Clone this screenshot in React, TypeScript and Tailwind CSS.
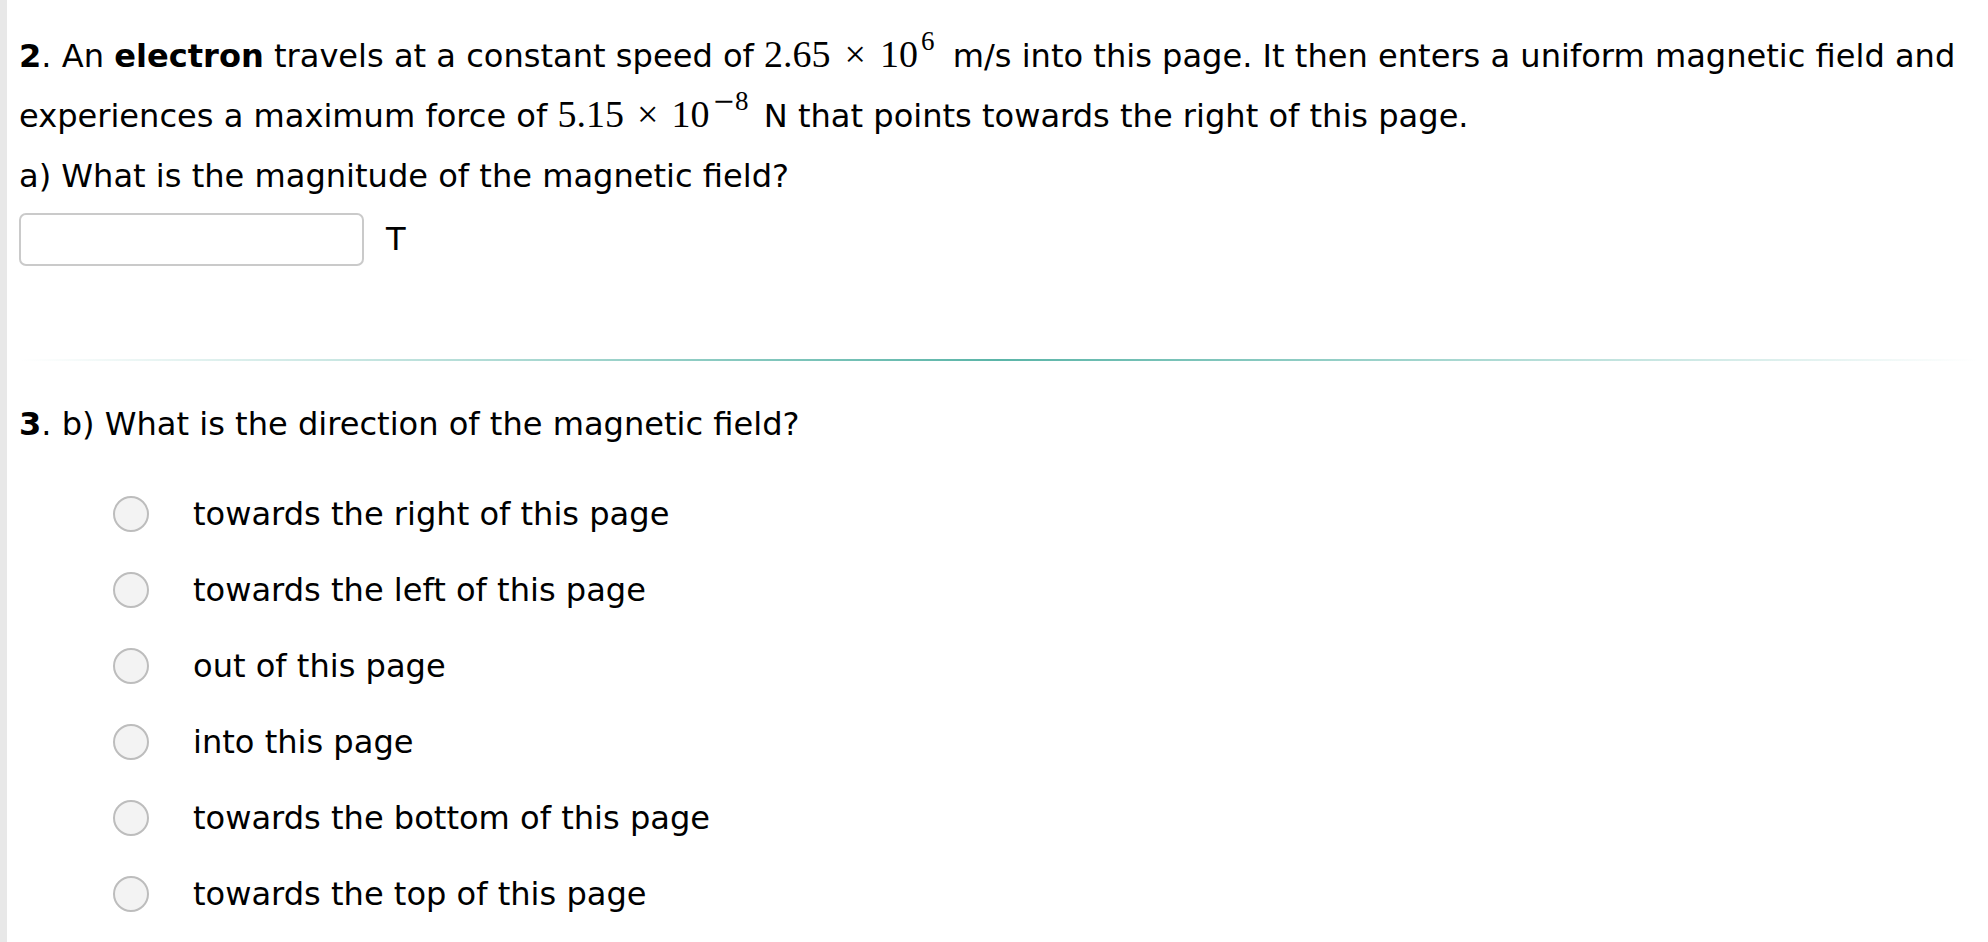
import React from "react";

const M = ({ children }: { children: React.ReactNode }) => (
  <span className="text-[38px] leading-none" style={{ fontFamily: '"Liberation Serif", "DejaVu Serif", serif' }}>
    {children}
  </span>
);

const options = [
  "towards the right of this page",
  "towards the left of this page",
  "out of this page",
  "into this page",
  "towards the bottom of this page",
  "towards the top of this page",
];

export default function App() {
  return (
    <div
      className="w-[1988px] h-[942px] overflow-hidden bg-white flex text-black"
      style={{ fontFamily: '"DejaVu Sans", Verdana, sans-serif' }}
    >
      <div className="w-[7px] shrink-0 bg-[#e8e8e8]" />
      <div className="flex-1 pl-[12px] pr-[10px] pt-[26px]">
        <div className="text-[32.1px] leading-[60px] whitespace-nowrap">
          <div>
            <b>2</b>. An <b>electron</b> travels at a constant speed of{" "}
            <M>
              2.65<span className="mx-[14px]">×</span>10
              <sup className="text-[27px] relative top-[-17px] ml-[3px] mr-[8px]">6</sup>
            </M>{" "}
            m/s into this page. It then enters a uniform magnetic field and
          </div>
          <div>
            experiences a maximum force of{" "}
            <M>
              5.15<span className="mx-[13px]">×</span>10
              <sup className="text-[27px] relative top-[-17px] ml-[3px] mr-[5px]">
                <span style={{ fontFamily: '"DejaVu Serif", serif' }}>−</span>8
              </sup>
            </M>{" "}
            N that points towards the right of this page.
          </div>
          <div>a) What is the magnitude of the magnetic field?</div>
        </div>
        <div className="mt-[7px] flex items-center">
          <div className="w-[345px] h-[53px] rounded-[7px] border-2 border-[#cacaca] bg-white" />
          <span className="ml-[22px] text-[32.1px]">T</span>
        </div>
        <div className="mt-[93px] h-[2px] w-full bg-[linear-gradient(to_right,rgba(91,181,168,0),#5bb5a8_50%,rgba(91,181,168,0))]" />
        <div className="mt-[33px] text-[32.1px] leading-[60px] whitespace-nowrap">
          <b>3</b>. b) What is the direction of the magnetic field?
        </div>
        <div className="mt-[22px] flex flex-col">
          {options.map((o) => (
            <div key={o} className="h-[76px] flex items-center pl-[94px]">
              <span className="w-[36px] h-[36px] rounded-full border-2 border-[#bdbdbd] bg-[#f3f3f3] shrink-0" />
              <span className="ml-[44px] text-[32.1px] whitespace-nowrap">{o}</span>
            </div>
          ))}
        </div>
      </div>
    </div>
  );
}
